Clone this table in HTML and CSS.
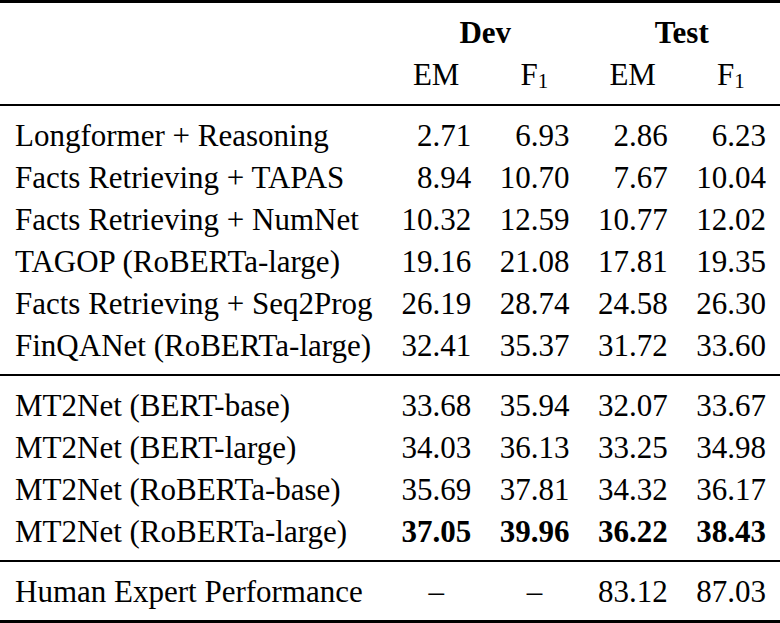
FILE: index.html
```html
<!DOCTYPE html>
<html lang="en">
<head>
<meta charset="utf-8">
<title>Results</title>
<link rel="stylesheet" href="styles.css">
</head>
<body>
<table class="results">
  <colgroup>
    <col class="col-label">
    <col class="col-num">
    <col class="col-num">
    <col class="col-num">
    <col class="col-num">
  </colgroup>
  <thead>
    <tr class="group-row">
      <th></th>
      <th colspan="2">Dev</th>
      <th colspan="2">Test</th>
    </tr>
    <tr class="metric-row">
      <th></th>
      <th>EM</th>
      <th>F<sub>1</sub></th>
      <th>EM</th>
      <th>F<sub>1</sub></th>
    </tr>
  </thead>
  <tbody class="section">
    <tr><td class="label">Longformer + Reasoning</td><td class="num">2.71</td><td class="num">6.93</td><td class="num">2.86</td><td class="num">6.23</td></tr>
    <tr><td class="label">Facts Retrieving + TAPAS</td><td class="num">8.94</td><td class="num">10.70</td><td class="num">7.67</td><td class="num">10.04</td></tr>
    <tr><td class="label">Facts Retrieving + NumNet</td><td class="num">10.32</td><td class="num">12.59</td><td class="num">10.77</td><td class="num">12.02</td></tr>
    <tr><td class="label">TAGOP (RoBERTa-large)</td><td class="num">19.16</td><td class="num">21.08</td><td class="num">17.81</td><td class="num">19.35</td></tr>
    <tr><td class="label">Facts Retrieving + Seq2Prog</td><td class="num">26.19</td><td class="num">28.74</td><td class="num">24.58</td><td class="num">26.30</td></tr>
    <tr><td class="label">FinQANet (RoBERTa-large)</td><td class="num">32.41</td><td class="num">35.37</td><td class="num">31.72</td><td class="num">33.60</td></tr>
  </tbody>
  <tbody class="section">
    <tr><td class="label">MT2Net (BERT-base)</td><td class="num">33.68</td><td class="num">35.94</td><td class="num">32.07</td><td class="num">33.67</td></tr>
    <tr><td class="label">MT2Net (BERT-large)</td><td class="num">34.03</td><td class="num">36.13</td><td class="num">33.25</td><td class="num">34.98</td></tr>
    <tr><td class="label">MT2Net (RoBERTa-base)</td><td class="num">35.69</td><td class="num">37.81</td><td class="num">34.32</td><td class="num">36.17</td></tr>
    <tr><td class="label">MT2Net (RoBERTa-large)</td><td class="num best">37.05</td><td class="num best">39.96</td><td class="num best">36.22</td><td class="num best">38.43</td></tr>
  </tbody>
  <tbody class="section last">
    <tr><td class="label">Human Expert Performance</td><td class="dash">–</td><td class="dash">–</td><td class="num">83.12</td><td class="num">87.03</td></tr>
  </tbody>
</table>
</body>
</html>
```
FILE: styles.css
```css
html, body {
  margin: 0;
  padding: 0;
  background: #fff;
}

.results {
  width: 780px;
  table-layout: fixed;
  border-collapse: separate;
  border-spacing: 0;
  font-family: "Liberation Serif", "Times New Roman", serif;
  font-size: 31px;
  line-height: 42px;
  color: #000;
}

.col-label {
  width: 387px;
}

.col-num {
  width: 98.25px;
}

.results th,
.results td {
  padding: 0 14px;
  white-space: nowrap;
}

.results th {
  text-align: center;
}

.results .label {
  text-align: left;
  padding-left: 15px;
  padding-right: 0;
}

.group-row th {
  font-weight: bold;
  border-top: 3px solid #000;
  padding-top: 8.5px;
}

.metric-row th {
  font-weight: normal;
  padding-bottom: 8px;
}

.metric-row sub {
  font-size: 21px;
  line-height: 0;
  vertical-align: -3px;
}

.num {
  text-align: right;
}

.dash {
  text-align: center;
}

.best {
  font-weight: bold;
}

.section tr:first-child td {
  border-top: 2px solid #000;
  padding-top: 9px;
}

.section tr:last-child td {
  padding-bottom: 7px;
}

.section.last tr:last-child td {
  border-bottom: 3px solid #000;
}
```
